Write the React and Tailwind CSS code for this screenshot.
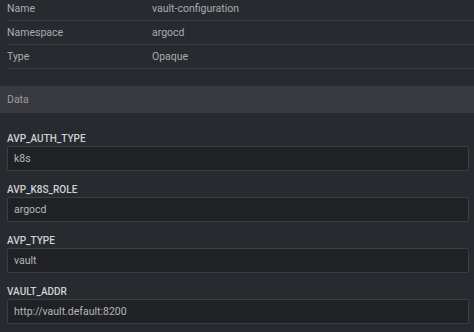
const meta = [
  { label: "Name", value: "vault-configuration" },
  { label: "Namespace", value: "argocd" },
  { label: "Type", value: "Opaque" },
];

const data = [
  { key: "AVP_AUTH_TYPE", value: "k8s" },
  { key: "AVP_K8S_ROLE", value: "argocd" },
  { key: "AVP_TYPE", value: "vault" },
  { key: "VAULT_ADDR", value: "http://vault.default:8200" },
];

export default function App() {
  return (
    <div
      className="w-full h-[332px] overflow-hidden bg-[#272b30] text-[10.5px] text-[#a9acb1]"
      style={{ fontFamily: "Roboto, 'Noto Sans', sans-serif" }}
    >
      {/* summary rows */}
      <div className="-mt-[3px] pl-[7px]">
        {meta.map((row) => (
          <div key={row.label} className="flex items-center h-[24px] pt-[1px] border-b border-[#363a40]">
            <div className="w-[145px] shrink-0">{row.label}</div>
            <div>{row.value}</div>
          </div>
        ))}
      </div>

      {/* data header */}
      <div className="mt-[17px] h-[27px] flex items-center pt-[1px] px-[7px] bg-[#393a3f] text-[#9a9da2]">
        Data
      </div>

      {/* data fields */}
      <div className="mt-[17px] px-[7px] pr-[5px] flex flex-col gap-[10px]">
        {data.map((f) => (
          <div key={f.key} className="flex flex-col">
            <div className="h-[16px] flex items-center font-medium text-[10px] text-[#cfd1d4]">{f.key}</div>
            <div className="h-[25px] flex items-center px-[6px] bg-[#1f2125] border border-[#3a3d42] rounded-[2px] text-[#b4b7bb]">
              {f.value}
            </div>
          </div>
        ))}
      </div>
    </div>
  );
}
